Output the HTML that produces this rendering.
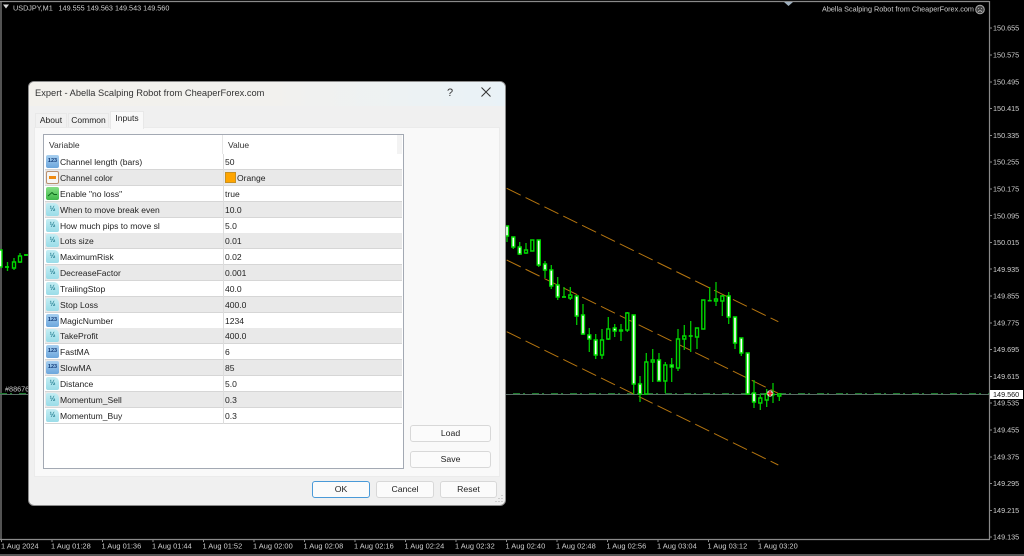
<!DOCTYPE html>
<html><head><meta charset="utf-8"><style>
html,body{margin:0;padding:0;background:#000;width:1024px;height:556px;overflow:hidden}
body{position:relative;font-family:"Liberation Sans",sans-serif}
svg.c{position:absolute;left:0;top:0;filter:blur(.3px)}
svg.c text{font-family:"Liberation Sans",sans-serif;font-size:7.25px;fill:#cfcfcf}
svg.c text.tm{font-size:7.45px}
.a{position:absolute;white-space:nowrap}
#d{position:absolute;left:28px;top:81px;width:476px;height:423px;border:1px solid #8c8c8c;border-radius:6px;background:#f0f0f0;overflow:hidden;font-size:8.5px;color:#222;filter:blur(.25px)}
#t{position:absolute;left:0;top:0;width:476px;height:24px;background:linear-gradient(90deg,#f3f1ec,#f2f1ee 50%,#e9f2f7)}
#p{position:absolute;left:5px;top:45px;width:464px;height:348px;background:#f9f9f9;border:1px solid #ebebeb}
#tb{position:absolute;left:14px;top:52px;width:359px;height:333px;background:#fff;border:1px solid #a3a9b3}
.r{position:absolute;left:1px;width:357px;height:15px;border-bottom:1px solid #d6d6d6}
.g{background:#e9e9e9}
.r b{position:absolute;font-weight:normal;top:3px;left:15px;font-size:8.55px;white-space:nowrap;color:#222}
.r i{position:absolute;font-style:normal;top:3px;left:180px;font-size:8.55px;white-space:nowrap;color:#222}
.r u{position:absolute;left:177.500px;top:0;width:1px;height:16px;background:#dcdcdc}
.k{position:absolute;left:1px;top:1px;width:13px;height:13px;border-radius:2px;text-align:center;line-height:13px;font-size:5.5px;font-weight:bold}
.n{background:linear-gradient(#a8d0f0,#6ca6dc);color:#123a78}
.h{background:linear-gradient(#c4edf3,#9adce8);color:#1f7b8e;font-size:7px;border-top-right-radius:5px}
.o{background:#f5f5f5;border:1px solid #b89070;box-sizing:border-box}
.o:after{content:"";position:absolute;left:2px;top:4px;width:7px;height:3px;background:#f08a10}
.e{background:linear-gradient(#84de84,#3fb84a)}
.btn{position:absolute;box-sizing:border-box;height:17px;background:#fbfbfb;border:1px solid #d8d8d8;border-radius:3px;text-align:center;line-height:15px;font-size:8.7px;color:#222}
.tab{position:absolute;font-size:8.5px;color:#222;text-align:center;box-sizing:border-box}
</style></head><body>
<svg class="c" width="1024" height="556" viewBox="0 0 1024 556">
<path d="M0 1.500H989M1 1V539M989.500 1V539M0 539.500H990M0 555H1024" stroke="#8a8a8a" stroke-width="1.200" fill="none"/>
<path d="M3 4.500h6l-3 4z" fill="#d8d8d8"/>
<path d="M784 2h9l-4.500 4z" fill="#9fb0bf"/>
<text x="13" y="10.500">USDJPY,M1</text>
<text x="58.500" y="10.500">149.555 149.563 149.543 149.560</text>
<text x="822" y="11.500">Abella Scalping Robot from CheaperForex.com</text>
<circle cx="980" cy="9.500" r="4.300" fill="#444" stroke="#aaa"/><path d="M978 8.500h.8M981.200 8.500h.8M978 11.500q2-1.500 4 0" stroke="#ddd" stroke-width=".8" fill="none"/>
<text x="5" y="391.500" fill="#bbb">#88676</text>

<g stroke="#8a8a8a" stroke-width="1" fill="none"><path d="M989 28h3M989 55h3M989 82h3M989 108.500h3M989 135.500h3M989 162h3M989 189h3M989 215.500h3M989 242.500h3M989 269h3M989 296h3M989 323h3M989 349.500h3M989 376.500h3M989 403h3M989 430h3M989 457h3M989 483.500h3M989 510.500h3M989 537h3"/>
<path d="M1.500 539v3M52 539v3M102.500 539v3M153 539v3M203.500 539v3M254 539v3M304.500 539v3M355 539v3M405.500 539v3M456 539v3M506.500 539v3M557 539v3M607.500 539v3M658 539v3M708.500 539v3M759 539v3"/></g>
<g>
<text x="993" y="30.700">150.655</text><text x="993" y="57.500">150.575</text><text x="993" y="84.300">150.495</text><text x="993" y="111">150.415</text><text x="993" y="137.900">150.335</text><text x="993" y="164.700">150.255</text><text x="993" y="191.500">150.175</text><text x="993" y="218.300">150.095</text><text x="993" y="245">150.015</text><text x="993" y="271.800">149.935</text><text x="993" y="298.600">149.855</text><text x="993" y="325.400">149.775</text><text x="993" y="352.200">149.695</text><text x="993" y="379">149.615</text><text x="993" y="405.700">149.535</text><text x="993" y="432.500">149.455</text><text x="993" y="459.300">149.375</text><text x="993" y="486">149.295</text><text x="993" y="512.800">149.215</text><text x="993" y="539.600">149.135</text>
</g>
<g>
<text class="tm" x="1" y="548.700">1 Aug 2024</text><text class="tm" x="51" y="548.700">1 Aug 01:28</text><text class="tm" x="101.500" y="548.700">1 Aug 01:36</text><text class="tm" x="152" y="548.700">1 Aug 01:44</text><text class="tm" x="202.500" y="548.700">1 Aug 01:52</text><text class="tm" x="253" y="548.700">1 Aug 02:00</text><text class="tm" x="303.500" y="548.700">1 Aug 02:08</text><text class="tm" x="354" y="548.700">1 Aug 02:16</text><text class="tm" x="404.500" y="548.700">1 Aug 02:24</text><text class="tm" x="455" y="548.700">1 Aug 02:32</text><text class="tm" x="505.500" y="548.700">1 Aug 02:40</text><text class="tm" x="556" y="548.700">1 Aug 02:48</text><text class="tm" x="606.500" y="548.700">1 Aug 02:56</text><text class="tm" x="657" y="548.700">1 Aug 03:04</text><text class="tm" x="707.500" y="548.700">1 Aug 03:12</text><text class="tm" x="758" y="548.700">1 Aug 03:20</text>
</g>

<path d="M0 394.500H989" stroke="#5a6e66" stroke-width="1"/>
<path d="M0 393.500H989" stroke="#1c7a2c" stroke-width="1" stroke-dasharray="7 3 2 7"/>

<g stroke="#b5750f" stroke-width="1" fill="none" stroke-dasharray="15.600 5.400">
<path d="M506.700 188.300L778.300 321.700"/>
<path d="M506.700 260L778.300 393.400"/>
<path d="M506.700 331.700L778.300 465"/>
</g>

<!-- wicks -->
<path stroke="#00c800" stroke-width="1.300" fill="none" d="M507 226V242M513.300 237V249M519.700 242V255M526 243V254M538.700 240V267M545 261V278M551.300 265V289M557.700 277V300M564 287V297M570.300 287V300M576.700 296V325M583 304V335M589.300 328V352M595.700 334V359M602 329V359M608.300 317V340M614.700 324V337M621 324V341M627.300 312V332M633.700 315V394M640 376V402M646.300 353V394M652.700 349V382M659 353V381M665.300 362V393M671.700 358V382M678 329V371M684.300 325V350M690.700 321V352M697 328V349M709.700 287V301M716 282V306M722.300 295V316M728.700 292V324M735 317V349M741.300 338V356M754 380V408M760.300 394V410M766.700 389V407M773 383V403M779.300 394V401"/>
<!-- bull hollow -->
<path stroke="#00d800" stroke-width="1.400" fill="#000" d="M524.500 250h3v3h-3zM530.800 240h3v11h-3zM568.800 295h3v3h-3zM600.500 340h3v15h-3zM606.800 329h3v10h-3zM619.500 330h3v1h-3zM625.800 313h3v17h-3zM644.800 362h3v32h-3zM651.200 360h3v2h-3zM663.800 365h3v16h-3zM676.500 339h3v29h-3zM682.800 336h3v3h-3zM695.500 328h3v9h-3zM701.800 300h3v29h-3zM714.500 299h3v2h-3zM720.800 296h3v5h-3zM758.800 398h3v5h-3zM765.200 394h3v6h-3zM777.800 394h3v2h-3z"/>
<!-- flats -->
<path stroke="#00d800" stroke-width="1.700" fill="none" d="M562 297h4M688.700 336h4M707.700 300.700h4M771 394.500h4"/>
<!-- bear white -->
<path stroke="#00e000" stroke-width="1.400" fill="#fff" d="M505.500 226h3v10h-3zM511.800 237h3v10h-3zM518.200 247h3v7h-3zM537.200 240h3v25h-3zM543.500 264h3v6h-3zM549.800 270h3v16h-3zM556.200 285h3v12h-3zM575.200 296h3v20h-3zM581.500 315h3v19h-3zM587.800 335h3v4h-3zM594.200 340h3v15h-3zM613.200 328h3v3h-3zM632.200 315h3v69h-3zM638.500 384h3v10h-3zM657.500 360h3v21h-3zM670.200 365h3v2h-3zM727.200 296h3v21h-3zM733.500 317h3v26h-3zM739.800 338h3v15h-3zM746.200 353h3v41h-3zM752.500 393h3v9h-3z"/>
<!-- left candles -->
<path stroke="#00c800" stroke-width="1.300" fill="none" d="M7.500 262V271M14 258V270M20 253V263M26 254V256"/>
<path stroke="#00d800" stroke-width="1.400" fill="#000" d="M12.500 262h3v6h-3zM18.500 256h3v6h-3z"/>
<path stroke="#00e000" stroke-width="1.400" fill="#fff" d="M-1 250h3v17h-3z"/>
<path stroke="#00d800" stroke-width="1.700" d="M5 267h4M24 255h4"/>
<!-- marker -->
<circle cx="770" cy="393.500" r="3.200" fill="#fff" opacity=".75"/>
<path d="M767.500 393.500h5M770 391v5" stroke="#f01818" stroke-width="1.600"/>
<rect x="990" y="390" width="33" height="9" fill="#fff"/>
<text x="993" y="397" style="fill:#111">149.560</text>
</svg>

<div id="d">
<div id="t"></div>
<div class="a" style="left:6px;top:5.500px;font-size:9.300px;color:#333">Expert - Abella Scalping Robot from CheaperForex.com</div>
<div class="a" style="left:418px;top:5px;font-size:11px;color:#333">?</div>
<svg class="a" style="left:451px;top:4px" width="12" height="12"><path d="M1.500 1.500L10.500 10.500M10.500 1.500L1.500 10.500" stroke="#333" stroke-width="1"/></svg>
<div class="tab" style="left:6px;top:31px;width:32px;height:15px;line-height:13px;background:#f1f1f1;border:1px solid #e8e8e8;border-bottom:0">About</div>
<div class="tab" style="left:39px;top:31px;width:41px;height:15px;line-height:13px;background:#f1f1f1;border:1px solid #e8e8e8;border-bottom:0">Common</div>
<div id="p"></div>
<div class="tab" style="left:81px;top:29px;width:34px;height:18px;line-height:13px;background:#f9f9f9;border:1px solid #e8e8e8;border-bottom:0">Inputs</div>
<div id="tb">
<div class="a" style="left:5px;top:5px;color:#333;font-size:8.500px">Variable</div>
<div class="a" style="left:178px;top:0;width:1px;height:19px;background:#e6e6e6"></div>
<div class="a" style="left:184px;top:5px;color:#333;font-size:8.500px">Value</div>
<div class="a" style="left:353px;top:0;width:5px;height:19px;background:#f3f3f3"></div>
<div class="r" style="top:19px"><div class="k n">123</div><b>Channel length (bars)</b><u></u><i>50</i></div>
<div class="r g" style="top:35px"><div class="k o"></div><b>Channel color</b><u></u><span class="a" style="left:180px;top:2px;width:11px;height:11px;background:#ffa500;border:1px solid #c89020;box-sizing:border-box"></span><i style="left:192px">Orange</i></div>
<div class="r" style="top:50.800px"><div class="k e"></div><svg class="a" style="left:1px;top:1px" width="13" height="12"><path d="M2 9L6 5.500L8 7.500H11" stroke="#0d6a1c" fill="none"/></svg><b>Enable "no loss"</b><u></u><i>true</i></div>
<div class="r g" style="top:66.700px"><div class="k h">½</div><b>When to move break even</b><u></u><i>10.0</i></div>
<div class="r" style="top:82.500px"><div class="k h">½</div><b>How much pips to move sl</b><u></u><i>5.0</i></div>
<div class="r g" style="top:98.300px"><div class="k h">½</div><b>Lots size</b><u></u><i>0.01</i></div>
<div class="r" style="top:114.200px"><div class="k h">½</div><b>MaximumRisk</b><u></u><i>0.02</i></div>
<div class="r g" style="top:130px"><div class="k h">½</div><b>DecreaseFactor</b><u></u><i>0.001</i></div>
<div class="r" style="top:145.800px"><div class="k h">½</div><b>TrailingStop</b><u></u><i>40.0</i></div>
<div class="r g" style="top:161.700px"><div class="k h">½</div><b>Stop Loss</b><u></u><i>400.0</i></div>
<div class="r" style="top:177.500px"><div class="k n">123</div><b>MagicNumber</b><u></u><i>1234</i></div>
<div class="r g" style="top:193.300px"><div class="k h">½</div><b>TakeProfit</b><u></u><i>400.0</i></div>
<div class="r" style="top:209.200px"><div class="k n">123</div><b>FastMA</b><u></u><i>6</i></div>
<div class="r g" style="top:225px"><div class="k n">123</div><b>SlowMA</b><u></u><i>85</i></div>
<div class="r" style="top:240.800px"><div class="k h">½</div><b>Distance</b><u></u><i>5.0</i></div>
<div class="r g" style="top:256.700px"><div class="k h">½</div><b>Momentum_Sell</b><u></u><i>0.3</i></div>
<div class="r" style="top:272.500px"><div class="k h">½</div><b>Momentum_Buy</b><u></u><i>0.3</i></div>
</div>
<div class="btn" style="left:381px;top:343px;width:81px">Load</div>
<div class="btn" style="left:381px;top:369px;width:81px">Save</div>
<div class="btn" style="left:283px;top:399px;width:58px;border-color:#4a9ad8">OK</div>
<div class="btn" style="left:347px;top:399px;width:58px">Cancel</div>
<div class="btn" style="left:411px;top:399px;width:57px">Reset</div>
<svg class="a" style="left:465px;top:412px" width="10" height="10"><path d="M8 1v1M8 4v1M5 4v1M8 7v1M5 7v1M2 7v1" stroke="#aaa" stroke-width="1"/></svg>
</div>
</body></html>
